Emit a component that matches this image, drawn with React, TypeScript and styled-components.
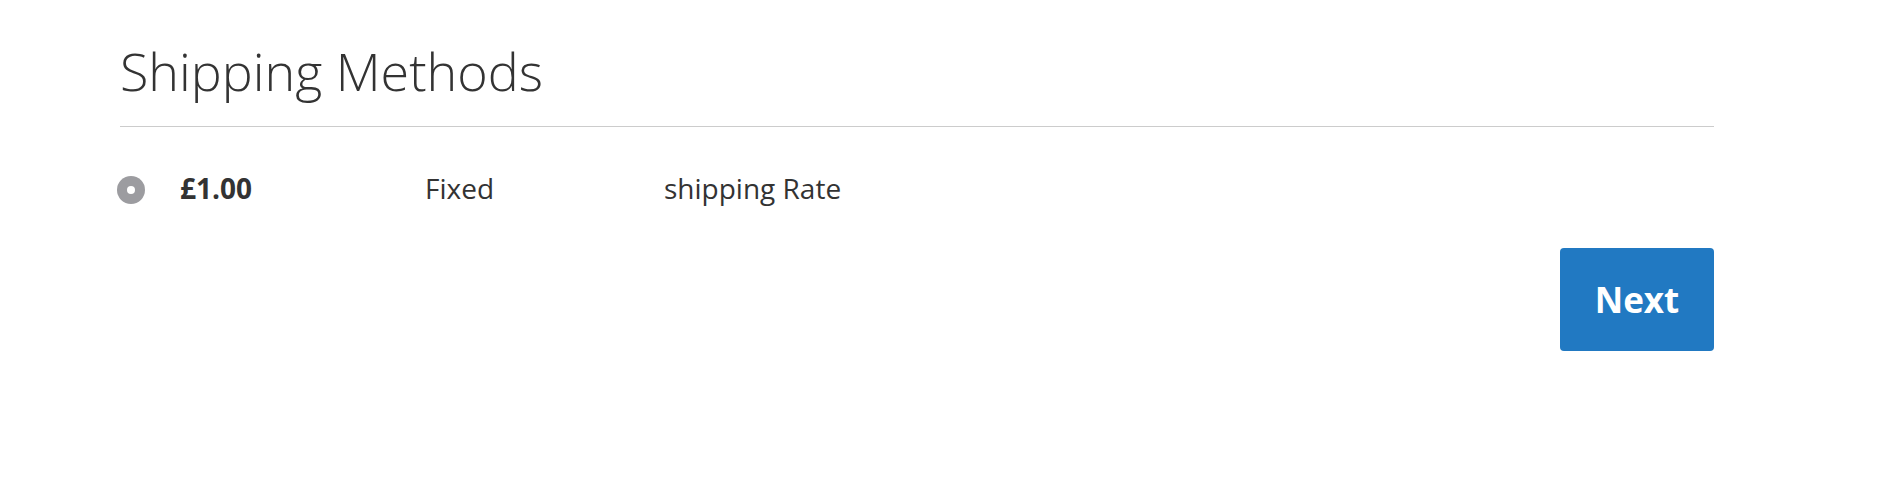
import React from "react";
import styled, { createGlobalStyle } from "styled-components";

const Global = createGlobalStyle`
  html, body { margin: 0; padding: 0; background: #ffffff; }
  body { font-family: "Open Sans", "Noto Sans", sans-serif; color: #333333; }
`;

const Page = styled.div`
  padding: 0 186px 0 120px;
  width: 1594px;
`;

const StepHeader = styled.div`
  margin-top: 35px;
  padding-bottom: 19px;
  border-bottom: 1px solid #cccccc;
`;

const Title = styled.h1`
  margin: 0;
  font-family: "Open Sans", sans-serif;
  font-weight: 300;
  font-size: 52px;
  line-height: 72px;
  color: #333333;
`;

const MethodRow = styled.div`
  display: flex;
  align-items: flex-start;
  margin-top: 42px;
  height: 38px;
`;

const RadioCell = styled.div`
  width: 63px;
  margin-left: -3px;
  padding-top: 7px;
`;

const Radio = styled.span`
  display: block;
  width: 28px;
  height: 28px;
  border-radius: 50%;
  background: #9c9ca0;
  position: relative;
  &::after {
    content: "";
    position: absolute;
    left: 10px;
    top: 10px;
    width: 8px;
    height: 8px;
    border-radius: 50%;
    background: #ffffff;
  }
`;

const Cell = styled.div<{ $w: number; $bold?: boolean }>`
  width: ${(p) => p.$w}px;
  font-size: 28px;
  line-height: 38px;
  font-weight: ${(p) => (p.$bold ? 700 : 400)};
  color: #333333;
  white-space: nowrap;
`;

const Actions = styled.div`
  display: flex;
  justify-content: flex-end;
  margin-top: 41px;
`;

const NextButton = styled.button`
  width: 154px;
  height: 103px;
  border: none;
  border-radius: 4px;
  background: #2179c2;
  color: #ffffff;
  font-family: "Open Sans", sans-serif;
  font-weight: 700;
  font-size: 35px;
  display: flex;
  align-items: center;
  justify-content: center;
  padding: 0;
  cursor: pointer;
`;

export default function App() {
  return (
    <>
      <Global />
      <Page>
        <StepHeader>
          <Title>Shipping Methods</Title>
        </StepHeader>
        <MethodRow>
          <RadioCell>
            <Radio />
          </RadioCell>
          <Cell $w={245} $bold>£1.00</Cell>
          <Cell $w={239}>Fixed</Cell>
          <Cell $w={300}>shipping Rate</Cell>
        </MethodRow>
        <Actions>
          <NextButton>Next</NextButton>
        </Actions>
      </Page>
    </>
  );
}
